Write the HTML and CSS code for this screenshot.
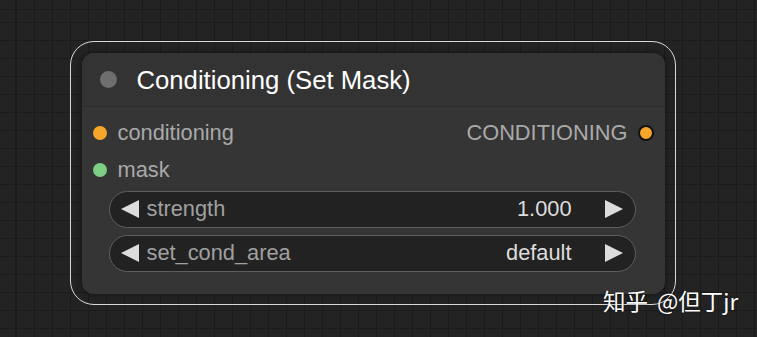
FILE: index.html
```html
<!DOCTYPE html>
<html>
<head>
<meta charset="utf-8">
<link rel="stylesheet" href="styles.css">
</head>
<body>
<div class="canvas">
  <div class="selection">
    <div class="node">
      <div class="title">
        <span class="title-dot"></span>
        <span class="title-text">Conditioning (Set Mask)</span>
      </div>
      <div class="slots">
        <div class="slot-row">
          <div class="slot-in"><span class="dot dot-orange"></span><span class="slot-label">conditioning</span></div>
          <div class="slot-out"><span class="slot-label">CONDITIONING</span><span class="dot dot-orange dot-out"></span></div>
        </div>
        <div class="slot-row">
          <div class="slot-in"><span class="dot dot-green"></span><span class="slot-label">mask</span></div>
        </div>
      </div>
      <div class="widgets">
        <div class="widget">
          <span class="arrow arrow-left"></span>
          <span class="w-name">strength</span>
          <span class="w-value">1.000</span>
          <span class="arrow arrow-right"></span>
        </div>
        <div class="widget">
          <span class="arrow arrow-left"></span>
          <span class="w-name">set_cond_area</span>
          <span class="w-value">default</span>
          <span class="arrow arrow-right"></span>
        </div>
      </div>
    </div>
  </div>
  <div class="watermark">知乎 <span class="wm-at">@但丁jr</span></div>
</div>
</body>
</html>
```
FILE: styles.css
```css
html, body {
  margin: 0;
  padding: 0;
}
body {
  width: 757px;
  height: 337px;
  overflow: hidden;
  font-family: "Liberation Sans", Arial, sans-serif;
}
.canvas {
  position: relative;
  width: 757px;
  height: 337px;
  background-color: #232323;
  background-image:
    repeating-linear-gradient(90deg, #1b1b1b 0 1px, transparent 1px 18px),
    repeating-linear-gradient(0deg, #1b1b1b 0 1px, transparent 1px 18px);
  background-position: 16px 0, 0 10px;
}
.selection {
  position: absolute;
  left: 70px;
  top: 41px;
  border: 1.5px solid #d8d8d8;
  border-radius: 24px;
  padding: 10.5px;
}
.node {
  width: 583px;
  height: 241px;
  background: #353535;
  border-radius: 12px;
  display: flex;
  flex-direction: column;
  box-shadow: 0 0 6px rgba(0,0,0,0.5);
}
.title {
  height: 53px;
  display: flex;
  align-items: center;
  border-bottom: 1px solid #2b2b2b;
  background: #333333;
  border-radius: 12px 12px 0 0;
}
.title-dot {
  width: 17px;
  height: 17px;
  border-radius: 50%;
  background: #6e6e6e;
  margin-left: 18px;
}
.title-text {
  margin-left: 20px;
  margin-top: 3px;
  color: #ffffff;
  font-size: 25.7px;
}
.slots {
  display: flex;
  flex-direction: column;
  padding-top: 8px;
}
.slot-row {
  height: 37px;
  display: flex;
  align-items: center;
  justify-content: space-between;
}
.slot-in, .slot-out {
  display: flex;
  align-items: center;
}
.dot {
  width: 14px;
  height: 14px;
  border-radius: 50%;
  box-sizing: border-box;
}
.dot-orange { background: #f5a62b; }
.dot-green { background: #7dcf86; }
.slot-in .dot { margin-left: 11px; margin-right: 11px; }
.dot-out {
  width: 16px;
  height: 16px;
  border: 2px solid #111;
  margin-left: 10px;
  margin-right: 11px;
}
.slot-label {
  color: #a9a9a9;
  font-size: 21.8px;
}
.widgets {
  display: flex;
  flex-direction: column;
  gap: 7px;
  padding: 2px 29px 0 27px;
}
.widget {
  height: 37px;
  box-sizing: border-box;
  border: 1.5px solid #5e5e5e;
  border-radius: 19px;
  background: #222222;
  display: flex;
  align-items: center;
  padding: 0 12px 0 11px;
}
.arrow {
  width: 0;
  height: 0;
  border-top: 9px solid transparent;
  border-bottom: 9px solid transparent;
}
.arrow-left {
  border-right: 18px solid #dcdcdc;
}
.arrow-right {
  border-left: 18px solid #dcdcdc;
}
.w-name {
  color: #a0a0a0;
  font-size: 21.8px;
  margin-left: 8px;
  flex: 1;
}
.w-value {
  color: #dddddd;
  font-size: 21.8px;
  margin-right: 33px;
}
.watermark {
  position: absolute;
  left: 603px;
  top: 284px;
  color: #ffffff;
  font-size: 22.5px;
  font-family: "Noto Sans CJK SC", "Liberation Sans", sans-serif;
  text-shadow: 0 0 2px rgba(0,0,0,0.6);
}
.wm-at {
  margin-left: 4px;
}
```
